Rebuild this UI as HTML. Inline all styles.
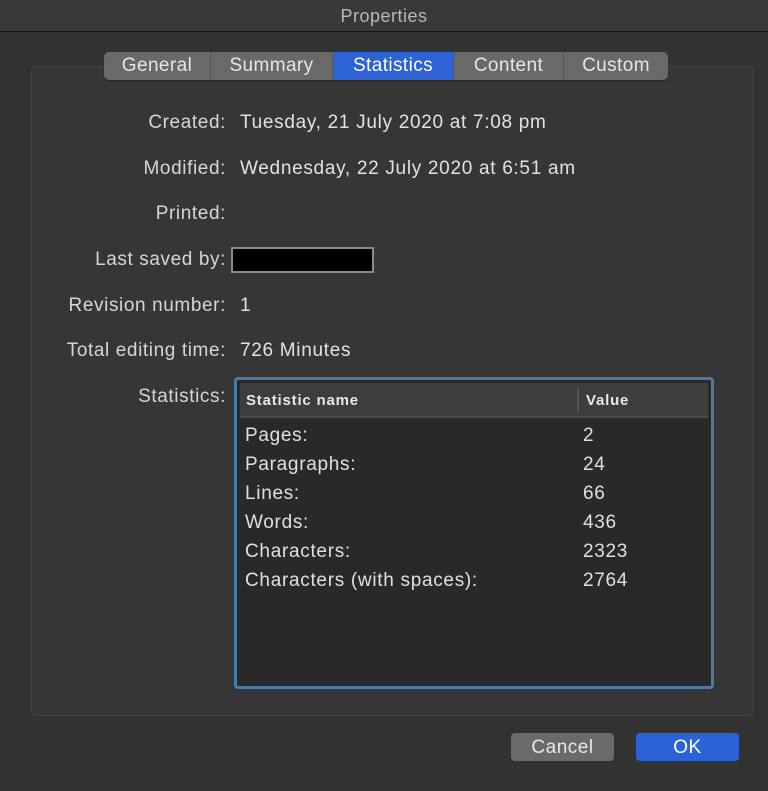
<!DOCTYPE html>
<html><head><style>
body{margin:0;width:768px;height:791px;background:#333233;font-family:"Liberation Sans",sans-serif;color:#dcdcdc;position:relative;overflow:hidden}
.title{position:absolute;left:0;top:0;width:768px;height:31px;background:#3a393a;border-bottom:1px solid #141414;text-align:center;line-height:32px;font-size:18px;color:#b8b8b8;letter-spacing:0.5px}
.panel{position:absolute;left:31px;top:66px;width:721px;height:648px;background:#373637;border:1px solid #444;border-radius:5px}
.tabs{position:absolute;left:104px;top:52px;height:28px;display:flex;border-radius:5px;overflow:hidden;background:#6a696a;box-shadow:0 1px 1px #222}
.tabs div{font-size:19px;line-height:28px;text-align:center;color:#e6e6e6;border-right:1px solid #555;letter-spacing:0.4px}
.tabs .on{background:#2d63d4;color:#fff}
.l{position:absolute;right:542px;font-size:19px;color:#d6d6d6;white-space:nowrap;letter-spacing:0.6px}
.v{position:absolute;left:240px;font-size:19px;color:#e2e2e2;white-space:nowrap;letter-spacing:0.7px}
.box{position:absolute;left:234px;top:377px;width:474px;height:306px;border:3px solid #4a7aa6;border-radius:4px;background:#2a292a}
.hd{position:absolute;left:3px;top:3px;right:3px;height:33px;background:#3e3d3e;border-bottom:2px solid #4a494a;font-size:15px;font-weight:bold;color:#e8e8e8;letter-spacing:0.8px}
.r{position:absolute;left:8px;font-size:19px;color:#e0e0e0;letter-spacing:0.7px;white-space:nowrap}
.rv{position:absolute;left:346px;font-size:19px;color:#e0e0e0;letter-spacing:0.7px}
.btn{position:absolute;top:733px;width:103px;height:28px;border-radius:4px;text-align:center;line-height:29px;font-size:19px;color:#e8e8e8;letter-spacing:0.5px}
</style></head><body>
<div class="title">Properties</div>
<div class="panel"></div>
<div class="tabs">
<div style="width:106px">General</div><div style="width:121px">Summary</div><div class="on" style="width:120px">Statistics</div><div style="width:109px">Content</div><div style="width:104px;border:none">Custom</div>
</div>
<div class="l" style="top:112px">Created:</div><div class="v" style="top:112px">Tuesday, 21 July 2020 at 7:08 pm</div>
<div class="l" style="top:158px">Modified:</div><div class="v" style="top:158px">Wednesday, 22 July 2020 at 6:51 am</div>
<div class="l" style="top:203px">Printed:</div>
<div class="l" style="top:249px">Last saved by:</div>
<div style="position:absolute;left:231px;top:247px;width:139px;height:22px;background:#000;border:2px solid #8a8a8a"></div>
<div class="l" style="top:295px">Revision number:</div><div class="v" style="top:295px">1</div>
<div class="l" style="top:340px">Total editing time:</div><div class="v" style="top:340px">726 Minutes</div>
<div class="l" style="top:386px">Statistics:</div>
<div class="box">
<div class="hd"><span style="position:absolute;left:6px;top:9px">Statistic name</span><span style="position:absolute;left:337px;top:4px;width:2px;height:25px;background:#555"></span><span style="position:absolute;left:346px;top:9px">Value</span></div>
<div class="r" style="top:45px">Pages:</div><div class="rv" style="top:45px">2</div>
<div class="r" style="top:74px">Paragraphs:</div><div class="rv" style="top:74px">24</div>
<div class="r" style="top:103px">Lines:</div><div class="rv" style="top:103px">66</div>
<div class="r" style="top:132px">Words:</div><div class="rv" style="top:132px">436</div>
<div class="r" style="top:161px">Characters:</div><div class="rv" style="top:161px">2323</div>
<div class="r" style="top:190px">Characters (with spaces):</div><div class="rv" style="top:190px">2764</div>
</div>
<div class="btn" style="left:511px;background:#6b6a6b">Cancel</div>
<div class="btn" style="left:636px;background:#2b63d6;color:#fff">OK</div>
</body></html>
